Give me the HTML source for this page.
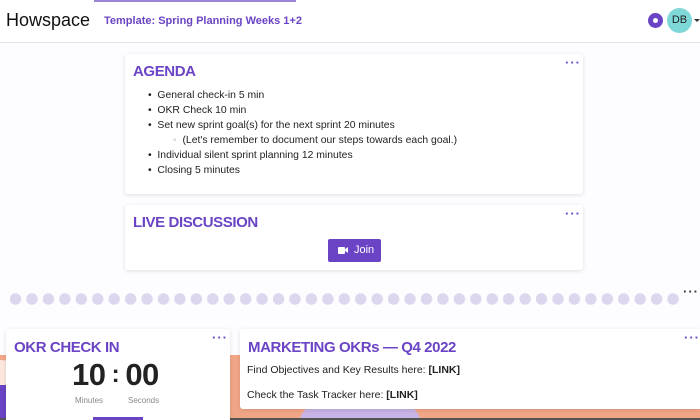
<!DOCTYPE html>
<html><head><style>
*{margin:0;padding:0;box-sizing:border-box}
html{width:700px;height:420px;overflow:hidden}
body{width:700px;height:420px;overflow:hidden;position:relative;background:#fdfcfe;font-family:"Liberation Sans",Arial,sans-serif;color:#222}
.abs{position:absolute}
.card{position:absolute;background:#fff;border-radius:3px;box-shadow:0 1px 4px rgba(0,0,0,.12)}
.h{color:#6a44c4;font-weight:bold;font-size:15px;letter-spacing:-.4px}
.dots{position:absolute;color:#6a44c4;font-size:13px;font-weight:bold;letter-spacing:1px;line-height:6px}
ul{list-style:none}
li{font-size:10.4px;line-height:15px;position:relative;padding-left:0}
</style></head><body>
<div class="abs" style="left:0;top:0;width:700px;height:43px;background:#fff;border-bottom:1px solid #e4e4e4"></div>
<div class="abs" style="left:94px;top:0;width:202px;height:2px;background:#9b85d8"></div>
<div class="abs" style="left:6px;top:10px;font-size:18px;color:#111">Howspace</div>
<div class="abs" style="left:104px;top:15px;font-size:11px;font-weight:bold;color:#6a44c4">Template: Spring Planning Weeks 1+2</div>
<div class="abs" style="left:648px;top:13px;width:15px;height:15px;border-radius:50%;background:#6a44c4"></div>
<div class="abs" style="left:653px;top:18px;width:5px;height:5px;border-radius:50%;background:#fff"></div>
<div class="abs" style="left:667px;top:8px;width:25px;height:25px;border-radius:50%;background:#7fd8d8;font-size:11px;text-align:center;line-height:25px;color:#222">DB</div>
<div class="abs" style="left:694px;top:19px;border-left:3px solid transparent;border-right:3px solid transparent;border-top:3px solid #333"></div>

<div class="abs" style="left:0;top:355px;width:700px;height:65px;background:#f0a686"></div>
<div class="abs" style="left:0;top:360px;width:40px;height:60px;background:#fbe7de;border-radius:0 40px 0 0"></div>
<div class="abs" style="left:0;top:385px;width:8px;height:35px;background:#6a44c4"></div>
<div class="abs" style="left:300px;top:395px;width:120px;height:25px;background:#c9b4e6;border-radius:60px 60px 0 0/25px 25px 0 0"></div>
<div class="abs" style="left:0;top:418px;width:700px;height:2px;background:#555"></div>

<div class="card" style="left:125px;top:54px;width:458px;height:140px">
  <div class="h abs" style="left:8px;top:9px">AGENDA</div>
  <div class="dots" style="left:440px;top:6px">···</div>
  <ul class="abs" style="left:23px;top:34px">
    <li>• &nbsp;General check-in 5 min</li>
    <li>• &nbsp;OKR Check 10 min</li>
    <li>• &nbsp;Set new sprint goal(s) for the next sprint 20 minutes</li>
    <li style="padding-left:25px"><span style="color:#999">◦</span> &nbsp;(Let's remember to document our steps towards each goal.)</li>
    <li>• &nbsp;Individual silent sprint planning 12 minutes</li>
    <li>• &nbsp;Closing 5 minutes</li>
  </ul>
</div>

<div class="card" style="left:125px;top:205px;width:458px;height:65px">
  <div class="h abs" style="left:8px;top:9px">LIVE DISCUSSION</div>
  <div class="dots" style="left:440px;top:6px">···</div>
  <div class="abs" style="left:203px;top:34px;width:53px;height:23px;background:#6a44c4;border-radius:2px;color:#fff;font-size:11px;line-height:23px">
    <span class="abs" style="left:10px;top:8px;width:7px;height:7px;background:#fff;border-radius:1px"></span>
    <span class="abs" style="left:16px;top:8px;border-top:3.5px solid transparent;border-bottom:3.5px solid transparent;border-right:4px solid #fff"></span>
    <span class="abs" style="left:26px;top:0">Join</span>
  </div>
</div>

<div class="abs" style="left:10px;top:293px;height:12px;background:radial-gradient(circle at 5.5px 6px,#ddd6ef 5.5px,transparent 6px) 0 0/16.45px 12px repeat-x;width:673px"></div>
<div class="dots" style="left:683px;top:289px;color:#333">···</div>

<div class="card" style="left:6px;top:329px;width:224px;height:91px;border-radius:3px 3px 0 0">
  <div class="h abs" style="left:8px;top:10px">OKR CHECK IN</div>
  <div class="dots" style="left:206px;top:6px">···</div>
  <div class="abs" style="left:66px;top:28px;font-size:31px;line-height:36px;font-weight:bold;color:#222;letter-spacing:-.5px">10<span style="font-size:24px;position:relative;top:-3px"> : </span>00</div>
  <div class="abs" style="left:69px;top:67px;font-size:8px;color:#888">Minutes</div>
  <div class="abs" style="left:122px;top:67px;font-size:8px;color:#888">Seconds</div>
  <div class="abs" style="left:87px;top:88px;width:50px;height:3px;background:#6a44c4"></div>
</div>

<div class="card" style="left:240px;top:329px;width:460px;height:80px;border-radius:3px 0 0 3px">
  <div class="h abs" style="left:8px;top:10px">MARKETING OKRs — Q4 2022</div>
  <div class="dots" style="left:444px;top:6px">···</div>
  <div class="abs" style="left:7px;top:35px;font-size:10.5px">Find Objectives and Key Results here: <b>[LINK]</b></div>
  <div class="abs" style="left:7px;top:60px;font-size:10.5px">Check the Task Tracker here: <b>[LINK]</b></div>
</div>
</body></html>
